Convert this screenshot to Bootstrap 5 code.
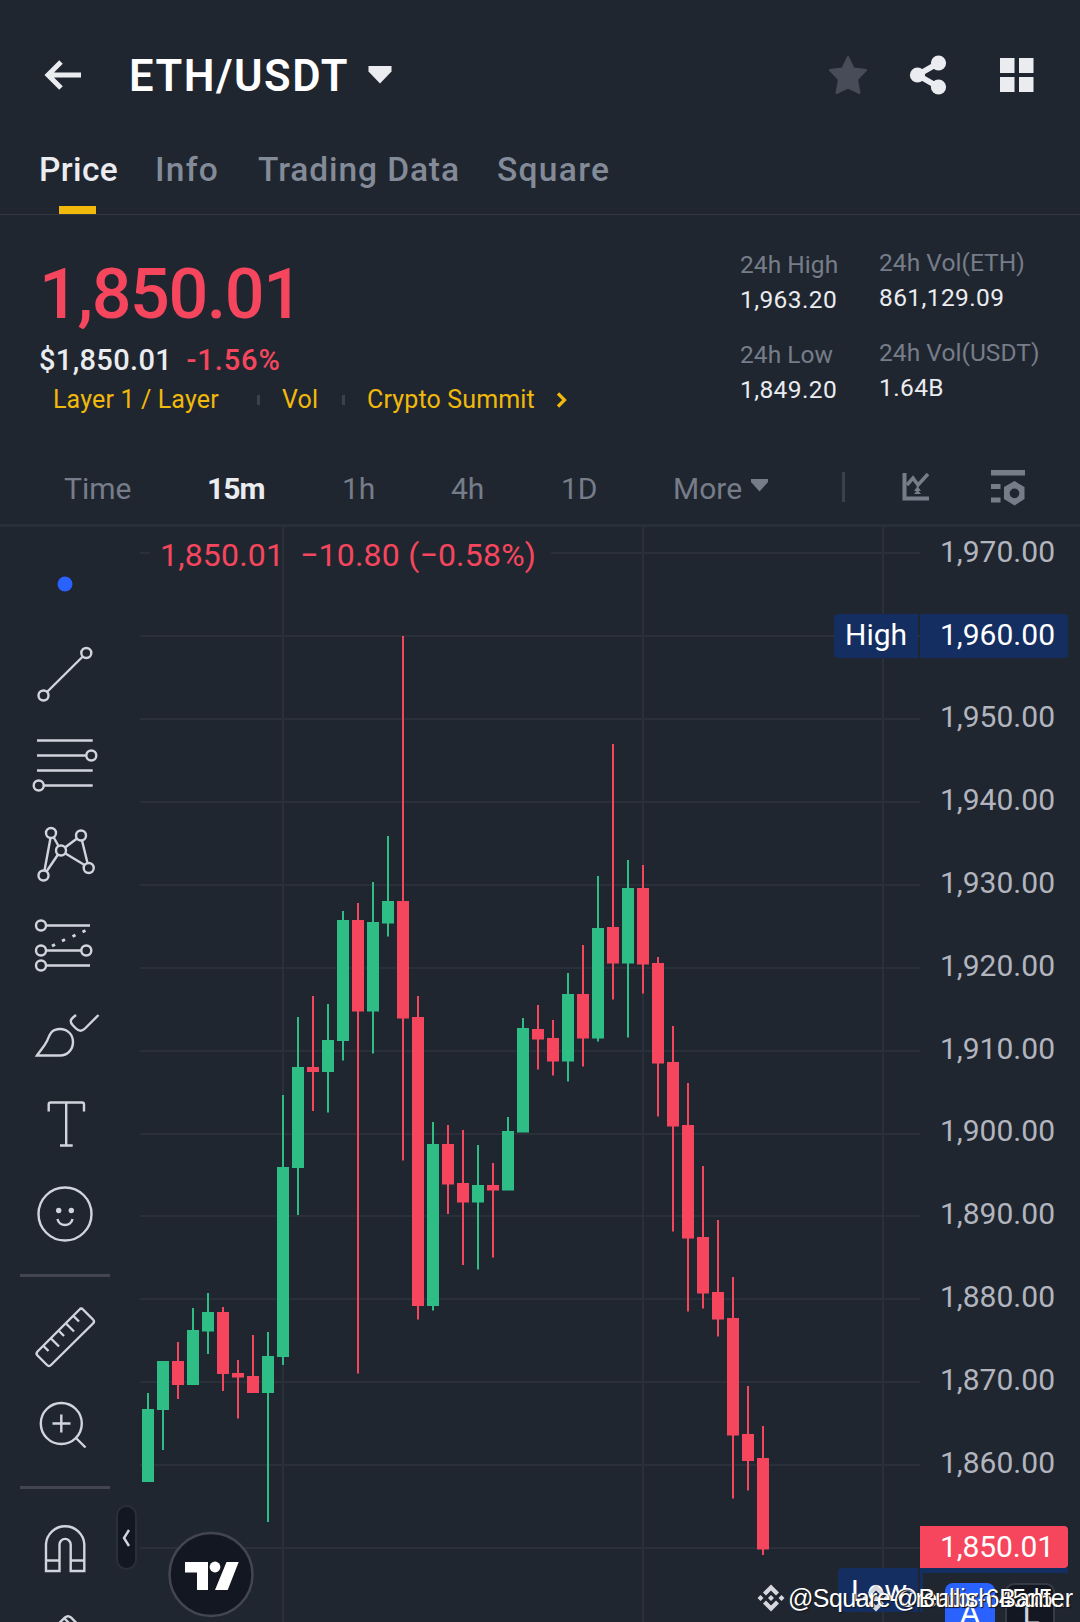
<!DOCTYPE html>
<html lang="en">
<head>
<meta charset="utf-8">
<meta name="viewport" content="width=device-width, initial-scale=1">
<title>ETH/USDT</title>
<link href="https://cdn.jsdelivr.net/npm/bootstrap@5.3.0/dist/css/bootstrap.min.css" rel="stylesheet">
<style>
  body{background:#202630;color:#eaecef;font-family:Roboto,"Noto Sans",sans-serif;width:1080px;height:1622px;overflow:hidden}
  svg{display:block;flex:none}
  .app{width:1080px;height:1622px;overflow:hidden}
  .topbar{height:124px;padding:25px 45px 0 44px}
  .pair{font-size:43.5px;font-weight:600;line-height:60px;color:#fff;letter-spacing:1.5px;margin:5px 0 0 47px;width:241px}
  .tabs{height:91px;display:grid;grid-template-columns:116px 103px 239px 1fr;padding-left:39px;border-bottom:1px solid #333841;font-size:33.5px;font-weight:500;line-height:92px;color:#848b98;letter-spacing:.9px}
  .tabs .on{color:#eaecef;position:relative;letter-spacing:.4px}
  .tabs .wide{letter-spacing:1.3px}
  .tabs .on::after{content:"";position:absolute;left:20px;top:82px;width:37px;height:8px;background:#f0b90b}
  .quote{height:237px;padding-left:39px}
  .left{width:701px;padding-top:42px}
  .last{font-size:70px;font-weight:500;line-height:74px;color:#f6465d;letter-spacing:-1.4px}
  .sub{font-size:29px;font-weight:500;line-height:58px;letter-spacing:.35px}
  .sub .chg{color:#f6465d;margin-left:14.5px;letter-spacing:.9px}
  .tags{font-size:25px;line-height:22px;color:#f0b90b;padding-left:14px;letter-spacing:.15px}
  .tick{width:3px;height:10px;background:#3a414d}
  .stat{font-size:24.5px;line-height:34.5px}
  .stat dt{font-weight:400;color:#767d89;letter-spacing:.05px}
  .stat dd{margin:0 0 21px;color:#eaecef;letter-spacing:.4px}
  .c1{width:139px;padding-top:33px}.c2{padding-top:31px}
  .ranges{height:72px;padding-left:64px;font-size:30px;line-height:73px;color:#767d89}
  .ranges .on{color:#eaecef;font-weight:700;letter-spacing:-.9px}
  .rule{height:3px;background:#292f39}
  .chartarea{height:1095px;position:relative}
  .tools{width:130px;padding-top:12px}
  .tools svg{fill:none;stroke:#d1d4dc;stroke-width:2.4}
  .cut{height:3px;width:90px;margin:15px 0 15px 20px;background:#434651}
  .plot{position:absolute;left:0;top:-2px;font-family:Roboto,sans-serif}
  .marks{font-family:"Liberation Sans",Arial,sans-serif}
</style>
</head>
<body>
<div class="app d-flex flex-column">
  <header class="topbar d-flex align-items-center">
    <svg width="38" height="32" viewBox="0 0 38 32" fill="none" stroke="#eaecef" stroke-width="5"><path d="M3 16H37M17 3 4 16 17 29"/></svg>
    <div class="pair">ETH/USDT</div>
    <svg width="24" height="18" viewBox="0 0 24 18" style="margin-left:-2px"><path fill="#eaecef" d="M.5 0H23.5V5.500L12 17.500.5 5.500Z"/></svg>
    <div class="ms-auto d-flex align-items-center">
      <svg width="38" height="40" viewBox="0 0 38 40"><path fill="#484c59" stroke="#484c59" stroke-width="2" stroke-linejoin="round" d="M19 2 24.500 13.500 37 15 28 24.500 30.500 38 19 32.500 7.500 38 10 24.500 1 15 13.500 13.500Z"/></svg>
      <svg width="38" height="40" viewBox="0 0 38 40" style="margin-left:42px"><path d="M8.500 20 29.500 8M8.500 20 29.500 32" stroke="#eaecef" stroke-width="5.500"/><g fill="#eaecef"><circle cx="8.500" cy="20" r="7.600"/><circle cx="29.500" cy="8" r="7.600"/><circle cx="29.500" cy="32" r="7.600"/></g></svg>
      <svg width="36" height="36" viewBox="0 0 36 36" style="margin-left:52px"><path fill="#eaecef" d="M1 1H15.500V16H1ZM20 1H34.500V16H20ZM1 20H15.500V35H1ZM20 20H34.500V35H20Z"/></svg>
    </div>
  </header>

  <nav class="tabs">
    <span class="on">Price</span><span class="wide">Info</span><span>Trading Data</span><span class="wide">Square</span>
  </nav>

  <section class="quote d-flex">
    <div class="left">
      <div class="last">1,850.01</div>
      <div class="sub">$1,850.01<span class="chg">-1.56%</span></div>
      <div class="tags d-flex align-items-center">
        <span style="width:204px">Layer 1 / Layer</span><i class="tick"></i>
        <span style="width:60px;margin-left:22px">Vol</span><i class="tick"></i>
        <span style="width:189px;margin-left:22px">Crypto Summit</span>
        <svg width="12" height="16" viewBox="0 0 12 16" fill="none" stroke="#f0b90b" stroke-width="3.200"><path d="M2 1.500 8.500 8 2 14.500"/></svg>
      </div>
    </div>
    <dl class="stat c1 mb-0"><dt>24h High</dt><dd>1,963.20</dd><dt>24h Low</dt><dd>1,849.20</dd></dl>
    <dl class="stat c2 mb-0"><dt>24h Vol(ETH)</dt><dd>861,129.09</dd><dt>24h Vol(USDT)</dt><dd>1.64B</dd></dl>
  </section>

  <div class="ranges d-flex align-items-center">
    <span style="width:143px">Time</span><span class="on" style="width:135px">15m</span><span style="width:109px">1h</span><span style="width:110px">4h</span><span style="width:112px">1D</span><span style="width:78px">More</span>
    <svg width="17" height="13" viewBox="0 0 17 13" style="margin-top:-5px"><path fill="#767d89" d="M0 0H17V3L8.500 12.500 0 3Z"/></svg>
    <svg width="3" height="30" viewBox="0 0 3 30" style="margin:-2px 0 0 74px"><path fill="#3a414d" d="M0 0H3V30H0Z"/></svg>
    <svg width="28" height="30" viewBox="0 0 28 30" style="margin:-2px 0 0 57px" fill="none" stroke="#767d89" stroke-width="4"><path d="M2.500 1V26.500H27"/><path stroke-width="3.500" d="M5 13 11 6 16 13 26 2"/><path fill="#767d89" stroke="none" d="M15.500 14 19 19H12ZM12 22 15.500 18 19 22Z"/></svg>
    <svg width="36" height="38" viewBox="0 0 36 38" style="margin-left:60px" fill="#767d89"><path d="M1 1H35V6.500H1ZM1 15H10.500V20H1ZM1 28.500H10.500V33.500H1Z"/><path fill-rule="evenodd" d="M24.500 12 34.500 18V30L24.500 36.500 14 30V18ZM24.500 19.500A4.800 4.800 0 1 0 24.500 29.200 4.800 4.800 0 1 0 24.500 19.500Z"/></svg>
  </div>
  <div class="rule"></div>

  <main class="chartarea">
    <svg class="plot" width="1080" height="1097" viewBox="0 525 1080 1097">
      <g id="grid" fill="#2a2f3a"></g>
      <path fill="#202630" d="M150 536H551V572H150Z"/>
      <path fill="#2a2f3a" d="M282 536H284V572H282Z"/>
      <g font-size="32" fill="#f6465d"><text x="160" y="566" textLength="124">1,850.01</text><text x="300" y="566" textLength="236">−10.80 (−0.58%)</text></g>
      <g id="candles"></g>
      <g id="axis" font-size="30" fill="#b2b5be"></g>
      <path fill="#142e61" d="M838 614H918V658H838A4 4 0 0 1 834 654V618A4 4 0 0 1 838 614ZM920 614H1064A4 4 0 0 1 1068 618V654A4 4 0 0 1 1064 658H920Z"/>
      <g font-size="30" fill="#fff"><text x="845" y="645" textLength="62">High</text><text x="940" y="645" textLength="115">1,960.00</text></g>
      <path fill="#142e61" d="M842 1568H918V1612H838V1572A4 4 0 0 1 842 1568ZM920 1568H1068V1573H923V1612H920Z"/>
      <path fill="#f6465d" d="M920 1526H1064A4 4 0 0 1 1068 1530V1565A4 4 0 0 1 1064 1568H920Z"/>
      <g font-size="30" fill="#fff"><text x="940" y="1556.500" textLength="114">1,850.01</text><text x="851" y="1601" textLength="56">Low</text></g>
      <rect x="945" y="1583" width="50" height="50" rx="8" fill="#2962ff"/>
      <rect x="1006" y="1584" width="48" height="48" rx="8" fill="#131722" stroke="#363a45" stroke-width="2"/>
      <g font-size="32" text-anchor="middle"><text x="970" y="1624" fill="#fff">A</text><text x="1031" y="1624" fill="#d1d4dc">L</text></g>
      <circle cx="211" cy="1574.500" r="41.500" fill="#131722" stroke="#434651" stroke-width="2.500"/>
      <path fill="#fff" d="M185 1562H208V1590H197V1572.500H185ZM226.500 1562H238.700L227.700 1590H215Z"/><circle cx="215" cy="1567" r="5.400" fill="#fff"/>
      <rect x="117" y="1506" width="19" height="63" rx="9.500" fill="#131722" stroke="#2a2e39" stroke-width="2"/>
      <path d="M129 1530 124 1538 129 1546" fill="none" stroke="#d1d4dc" stroke-width="2.400"/>
      <g class="marks" font-size="25" fill="#fff">
        <g id="wm" fill="#d6d8dd"></g>
        <g style="text-shadow:1px 1px 1px #10141b">
        <text x="788" y="1607" textLength="284">@Square-Creator-645d5...</text><text x="893" y="1607" textLength="180">@Bullish Banter</text></g>
      </g>
    </svg>

    <div class="tools d-flex flex-column">
      <svg width="130" height="90"><circle cx="65" cy="45" r="7.500" fill="#2962ff" stroke="none"/></svg>
      <svg width="130" height="90"><circle cx="86.300" cy="24" r="5"/><circle cx="43.500" cy="66.500" r="5"/><path d="M47 63 82.800 27.500"/></svg>
      <svg width="130" height="90"><path d="M37 21.500H92.700M37 36.500H86.300M37 51.500H92.700M43.700 66.500H92.700"/><circle cx="91.300" cy="36.500" r="5"/><circle cx="38.700" cy="66.500" r="5"/></svg>
      <svg width="130" height="90"><path d="M50.500 29 44.500 61.500M53.500 28 58.500 37M58 45.500 46.500 62.500M65 38.500 77 29.500M65.500 44.500 84.500 56M82 31.500 87.500 54"/><circle cx="51" cy="24" r="5"/><circle cx="81" cy="26.500" r="5"/><circle cx="61" cy="41.500" r="5"/><circle cx="88.700" cy="59" r="5"/><circle cx="43.500" cy="66.500" r="5"/></svg>
      <svg width="130" height="90"><path d="M46 26.500H90M46 51.500H81.300M46 66.500H90"/><circle cx="41" cy="26.500" r="5"/><circle cx="41" cy="51.500" r="5"/><circle cx="86.300" cy="51.500" r="5"/><circle cx="41" cy="66.500" r="5"/><path d="M52 47 55 45.500M62 42 65 40.500M72.500 37.500 75.500 36M82.500 33 85.500 31.500" stroke-width="3"/></svg>
      <svg width="130" height="90"><path d="M37 66.500H60C68 66.500 73 60 73 53 73 45 67 40 60 40 50 40 49 48 47 52 44 58 40 62 37 66.500Z"/><path d="M98.500 26 85 39.500C82 42.500 79 42.500 76 39.500L73 36.500C70 33 70 31 73 28.500L76 26"/></svg>
      <svg width="130" height="90"><path d="M48.700 32.500V25.500Q48.700 23.500 50.700 23.500H82Q84 23.500 84 25.500V32.500M66.200 23.500V66.500M60 66.500H72.700"/></svg>
      <svg width="130" height="90"><circle cx="65" cy="45" r="26.500"/><g fill="#d1d4dc" stroke="none"><circle cx="58.700" cy="41.500" r="2.700"/><circle cx="71.300" cy="41.500" r="2.700"/></g><path d="M57.500 50C59 58 71 58 72.500 50"/></svg>
      <div class="cut"></div>
      <svg width="130" height="90"><path stroke-linejoin="round" d="M79.500 17.500Q81.200 15.500 83 17.500L93 27.500Q95 29.500 93 31.500L51 73Q49 75 47 73L37.500 63.500Q35.500 61.500 37.500 59.500Z"/><path d="M43.500 54 48.500 59M51 46.500 59 54.500M59 39 64 44M66 31.500 74 39.500M73.500 24 79 29.500"/></svg>
      <svg width="130" height="90"><circle cx="61.300" cy="41.500" r="20.500"/><path d="M52.500 41.500H70.500M61.300 32.500V50.500M76 56 85.500 65.500"/></svg>
      <div class="cut" style="margin-top:14px"></div>
      <svg width="130" height="90"><path d="M46 67V40A19.200 19.200 0 0 1 84.300 40V67H70.700V40.500A5.600 5.600 0 0 0 59.500 40.500V67ZM46 56.500H59.500M70.700 56.500H84.300"/></svg>
      <svg width="130" height="90"><path d="M52 36 65 23.500Q68 21 71 23.500L76 28.500Q79 31.500 76 34.500M59 29 69 39M64.500 24.500 74 34"/></svg>
    </div>
  </main>
</div>
<script src="https://cdn.jsdelivr.net/npm/bootstrap@5.3.0/dist/js/bootstrap.bundle.min.js"></script>
<script>
  // one row per 15-minute candle: direction, high, body top, body bottom, low
  const bars = [
    ['g',1393,1409,1482,1482],['g',1361,1361,1410,1450],['r',1342,1361,1385,1399],['g',1308,1330,1385,1385],
    ['g',1293,1312,1331.5,1354],['r',1307,1312,1374,1391],['r',1360,1373,1377.5,1418.5],['r',1335,1376,1393,1393],
    ['g',1332,1356,1393,1522],['g',1095,1167,1357,1365],['g',1017,1067,1168,1215],['r',996,1067,1072,1111],
    ['g',1004,1040,1072,1112.5],['g',911,920,1041,1060.5],['r',903,920,1011.5,1373.5],['g',882,922,1011.5,1053.5],
    ['g',836,901,923.5,936.5],['r',636,901,1018.5,1160.5],['r',996,1017,1306,1319.5],['g',1122,1144,1306,1310.5],
    ['r',1125,1144,1184.5,1214],['r',1130,1183,1202.5,1265],['g',1145,1185,1202.5,1269.5],['r',1163,1185,1190.5,1257.5],
    ['g',1117,1131,1190.5,1190.5],['g',1018,1028,1132.5,1132.5],['r',1005,1029,1039.5,1069.5],['r',1020,1038,1061.5,1075.5],
    ['g',973,994,1061.5,1081.5],['r',945,994,1038.5,1066.5],['g',876,928,1038.5,1041.5],['r',744,927,963.5,999.5],
    ['g',860,888,963.5,1037.5],['r',865,888,964.5,993.5],['r',957,963,1063.5,1116.5],['r',1026,1062,1126.5,1231.5],
    ['r',1083,1125,1238.5,1311.5],['r',1166,1237,1293.5,1308.5],['r',1220,1292,1319.5,1336.5],['r',1277,1318,1435.5,1498.5],
    ['r',1386,1434,1461,1490.5],['r',1426,1458,1549.5,1555]
  ];
  const ink = {g:'#2ebd85', r:'#f6465d'};
  document.getElementById('candles').innerHTML = bars.map(([k,h,a,b,l],i) => {
    const x = 148 + 15*i;
    return `<path fill="${ink[k]}" d="M${x-1} ${h}h2V${l}h-2ZM${x-6} ${a}h12V${b}h-12Z"/>`;
  }).join('');
  let grid = '', axis = '';
  [553,636,719,802,885,968,1051,1134,1216,1299,1382,1465,1548].forEach((y,i) => {
    grid += `<path d="M140 ${y-1}H920V${y+1}H140Z"/>`;
    if (i !== 1 && i !== 12) axis += `<text x="940" y="${(561.5 + i*82.85).toFixed(1)}" textLength="115">1,${970-10*i}.00</text>`;
  });
  [283,643,883].forEach(x => grid += `<path d="M${x-1} 527H${x+1}V1622H${x-1}Z"/>`);
  document.getElementById('grid').innerHTML = grid;
  document.getElementById('axis').innerHTML = axis;
  const mark = '<path d="M0-13.500 8-5.500 5-2.500 0-7.500-5-2.500-8-5.500ZM0 13.500 8 5.500 5 2.500 0 7.500-5 2.500-8 5.500ZM0-3 3 0 0 3-3 0ZM-10.500-3-7.500 0-10.500 3-13.500 0ZM10.500-3 13.500 0 10.500 3 7.500 0Z"/>';
  document.getElementById('wm').innerHTML = [771,876].map(x => `<g transform="translate(${x} 1598)">${mark}</g>`).join('');
</script>
</body>
</html>
